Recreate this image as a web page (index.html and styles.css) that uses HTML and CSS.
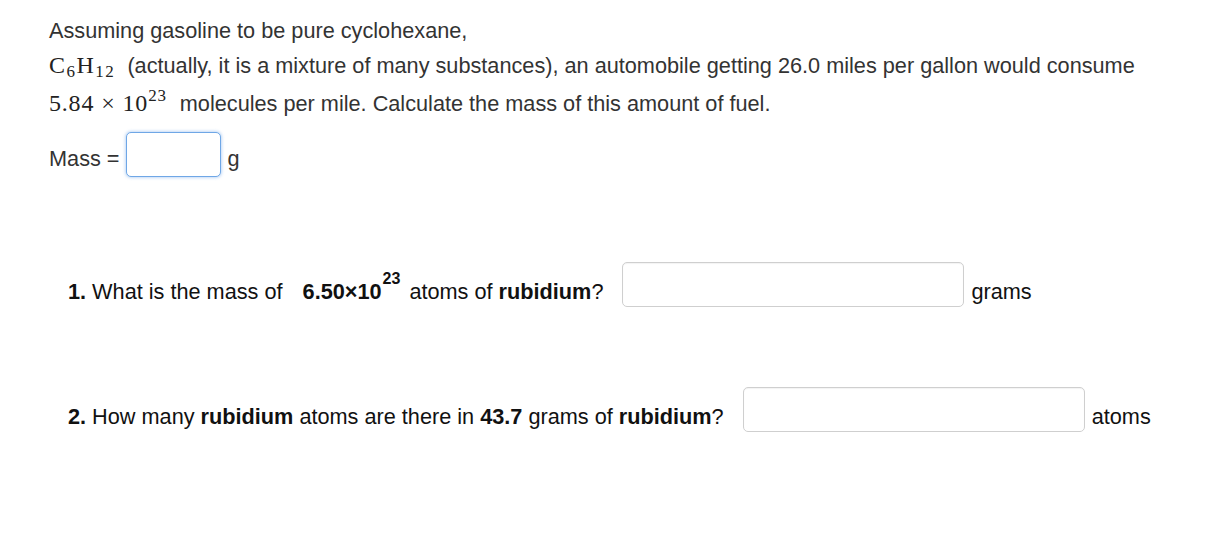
FILE: index.html
```html
<!DOCTYPE html>
<html>
<head>
<meta charset="utf-8">
<link rel="stylesheet" href="styles.css">
</head>
<body>
<div class="page">
  <div class="intro">
    <div class="line">Assuming gasoline to be pure cyclohexane,</div>
    <div class="line"><span class="math chem">C<sub>6</sub>H<sub>12</sub></span> (actually, it is a mixture of many substances), an automobile getting 26.0 miles per gallon would consume</div>
    <div class="line line3"><span class="math num-math">5.84<span class="times">×</span>10<sup>23</sup></span> molecules per mile. Calculate the mass of this amount of fuel.</div>
  </div>
  <div class="mass-row">
    <span class="mass-label">Mass =</span><span class="field field-focus"></span><span class="unit-g">g</span>
  </div>
  <div class="question q1">
    <span class="qtext"><b>1.</b> What is the mass of <b class="num">6.50×10<sup class="exp">23</sup></b> atoms of <b>rubidium</b>?</span><span class="field field-wide"></span><span class="unit">grams</span>
  </div>
  <div class="question q2">
    <span class="qtext"><b>2.</b> How many <b>rubidium</b> atoms are there in <b>43.7</b> grams of <b>rubidium</b>?</span><span class="field field-wide"></span><span class="unit">atoms</span>
  </div>
</div>
</body>
</html>
```

FILE: styles.css
```css
html, body {
  margin: 0;
  padding: 0;
  background: #fff;
}
body {
  font-family: "Liberation Sans", Arial, sans-serif;
  color: #333;
}
.page {
  padding: 17px 0 0 49px;
}
.intro {
  font-size: 21.7px;
  color: #333;
}
.line {
  height: 34px;
  line-height: 28px;
  white-space: nowrap;
}
.line3 {
  height: 38px;
  padding-top: 4px;
}
.math {
  font-family: "Liberation Serif", "Times New Roman", serif;
  font-size: 24px;
  color: #222;
}
.chem {
  letter-spacing: 1.5px;
  margin-right: 6px;
}
.num-math {
  letter-spacing: 0.8px;
  margin-right: 7px;
}
.times {
  margin: 0 7px;
}
.math sub {
  font-size: 17px;
  vertical-align: -4px;
  line-height: 0;
}
.math sup {
  font-size: 17px;
  vertical-align: 10px;
  line-height: 0;
}
.mass-row {
  margin-top: 4px;
  display: flex;
  align-items: center;
  font-size: 21.7px;
  height: 46px;
}
.mass-label {
  margin-right: 6px;
  position: relative;
  top: 5px;
}
.field {
  display: inline-block;
  box-sizing: border-box;
  height: 45px;
  background: #fff;
  border-radius: 5px;
  flex: none;
}
.field-focus {
  width: 95px;
  border: 1px solid #6fa7e6;
  box-shadow: 0 0 3px 1px rgba(120, 170, 235, 0.45);
}
.unit-g {
  margin-left: 7px;
  position: relative;
  top: 5px;
}
.question {
  display: flex;
  align-items: flex-start;
  color: #111;
  font-size: 21.7px;
  margin-left: 19px;
  white-space: nowrap;
}
.q1 {
  margin-top: 85px;
}
.q2 {
  margin-top: 80px;
}
.qtext {
  padding-top: 17px;
}
.num {
  margin-left: 14px;
}
.exp {
  font-size: 16px;
  vertical-align: 15px;
  line-height: 0;
  margin-left: 1px;
  margin-right: 3px;
}
.field-wide {
  width: 342px;
  border: 1px solid #cfcfcf;
  border-radius: 5px;
  box-shadow: inset 0 1px 1px rgba(0, 0, 0, 0.05);
}
.q1 .field-wide {
  margin-left: 19px;
}
.q2 .field-wide {
  margin-left: 19px;
}
.unit {
  padding-top: 17px;
  margin-left: 7px;
}
```
